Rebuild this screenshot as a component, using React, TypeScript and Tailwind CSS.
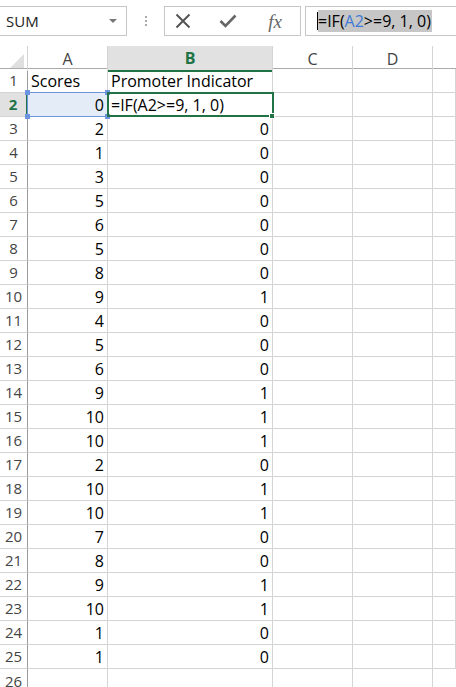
import React from 'react'

const SCORES = [2, 1, 3, 5, 6, 5, 8, 9, 4, 5, 6, 9, 10, 10, 2, 10, 10, 7, 8, 9, 10, 1, 1]

const cols = 'grid grid-cols-[28px_80px_165px_80px_80px_1fr]'
const cell = 'h-[24px] border-r border-b border-[#d4d4d4] flex items-center px-[3px] text-[16px] text-black'
const rowHead = 'h-[24px] border-r border-[#9b9b9b] border-b border-b-[#d4d4d4] flex items-center justify-center text-[15px] text-[#444]'

function Handle({ className }: { className: string }) {
  return <div className={`absolute w-[5px] h-[5px] bg-[#6d95df] ${className}`} />
}

export default function App() {
  return (
    <div className="w-[456px] h-[687px] overflow-hidden bg-white" style={{ fontFamily: '"Open Sans", sans-serif' }}>
      {/* Toolbar */}
      <div className="h-[46px] flex items-start pt-[6px]">
        <div className="w-[127px] h-[30px] border border-l-0 border-[#c6c6c6] flex items-center justify-between pl-[6px] pr-[9px]">
          <span className="text-[15px] text-[#222]">SUM</span>
          <svg width="8" height="5" viewBox="0 0 8 5"><path d="M0 0h8L4 4z" fill="#777" /></svg>
        </div>
        <div className="w-[37px] h-[30px] flex items-center justify-center">
          <div className="flex flex-col gap-[2px]">
            <div className="w-[2px] h-[2px] bg-[#aaa]" />
            <div className="w-[2px] h-[2px] bg-[#aaa]" />
            <div className="w-[2px] h-[2px] bg-[#aaa]" />
          </div>
        </div>
        <div className="w-[137px] h-[30px] border border-[#c6c6c6] flex items-center">
          <div className="w-[36px] flex justify-center">
            <svg width="16" height="16" viewBox="0 0 16 16"><path d="M1.5 1.5l13 13M14.5 1.5l-13 13" stroke="#555" strokeWidth="2" /></svg>
          </div>
          <div className="w-[54px] flex justify-center">
            <svg width="18" height="14" viewBox="0 0 18 14"><path d="M1.5 7l5 5L16.5 1.5" stroke="#666" strokeWidth="2.6" fill="none" /></svg>
          </div>
          <div className="w-[40px] flex justify-center">
            <span className="text-[19px] italic text-[#666] leading-none" style={{ fontFamily: '"Liberation Serif", serif' }}>fx</span>
          </div>
        </div>
        <div className="ml-[4px] flex-1 h-[30px] border border-r-0 border-[#c6c6c6] flex items-center pl-[11px]">
          <div className="w-[1px] h-[18px] bg-black" />
          <span className="bg-[#c6c6c6] text-[16px] text-black leading-[22px] pr-[1px]">
            =IF(<span className="text-[#3f7ad6]">A2</span>&gt;=9, 1, 0)
          </span>
        </div>
      </div>

      {/* Column headers */}
      <div className={`${cols} h-[23px] border-b border-[#ababab]`}>
        <div className="relative border-r border-[#d4d4d4]">
          <svg className="absolute right-[3px] bottom-[3px]" width="14" height="14" viewBox="0 0 14 14"><path d="M14 0v14H0z" fill="#dfdfdf" /></svg>
        </div>
        <div className="border-r border-[#d4d4d4] flex items-center justify-center text-[16px] text-[#444]">A</div>
        <div className="bg-[#e1e1e1] border-r border-[#d4d4d4] border-b-2 border-b-[#217346] -mb-[1px] flex items-center justify-center text-[16px] font-bold text-[#217346]">B</div>
        <div className="border-r border-[#d4d4d4] flex items-center justify-center text-[16px] text-[#444]">C</div>
        <div className="border-r border-[#d4d4d4] flex items-center justify-center text-[16px] text-[#444]">D</div>
        <div />
      </div>

      {/* Rows */}
      <div className={cols}>
        {/* row 1 */}
        <div className={rowHead}>1</div>
        <div className={cell}>Scores</div>
        <div className={cell}>Promoter Indicator</div>
        <div className={cell} />
        <div className={cell} />
        <div className={cell} />

        {/* row 2 */}
        <div className="h-[24px] bg-[#e1e1e1] border-r-2 border-[#217346] border-b border-b-[#d4d4d4] flex items-center justify-center text-[15px] font-bold text-[#217346]">2</div>
        <div className={`${cell} relative justify-end bg-[#e4ecf8]`}>
          <div className="absolute -left-[1px] -top-[1px] w-[81px] h-[25px] border border-[#6d95df]" />
          <Handle className="-left-[3px] -top-[3px]" />
          <Handle className="-right-[3px] -top-[3px]" />
          <Handle className="-left-[3px] -bottom-[3px]" />
          <Handle className="-right-[3px] -bottom-[3px]" />
          <span className="relative">0</span>
        </div>
        <div className={`${cell} relative`}>
          <div className="absolute -left-[1px] -top-[1px] w-[167px] h-[25px] border-2 border-[#217346]" />
          <div className="absolute -right-[3px] -bottom-[3px] w-[6px] h-[6px] bg-[#217346] border border-white" />
          <span className="relative">=IF(A2&gt;=9, 1, 0)</span>
        </div>
        <div className={cell} />
        <div className={cell} />
        <div className={cell} />

        {SCORES.map((s, i) => (
          <React.Fragment key={i}>
            <div className={rowHead}>{i + 3}</div>
            <div className={`${cell} justify-end`}>{s}</div>
            <div className={`${cell} justify-end`}>{s >= 9 ? 1 : 0}</div>
            <div className={cell} />
            <div className={cell} />
            <div className={cell} />
          </React.Fragment>
        ))}

        {/* row 26 */}
        <div className="h-[24px] border-r border-[#9b9b9b] flex items-center justify-center text-[15px] text-[#444]">26</div>
        <div className="h-[24px] border-r border-[#d4d4d4]" />
        <div className="h-[24px] border-r border-[#d4d4d4]" />
        <div className="h-[24px] border-r border-[#d4d4d4]" />
        <div className="h-[24px] border-r border-[#d4d4d4]" />
        <div />
      </div>
    </div>
  )
}
